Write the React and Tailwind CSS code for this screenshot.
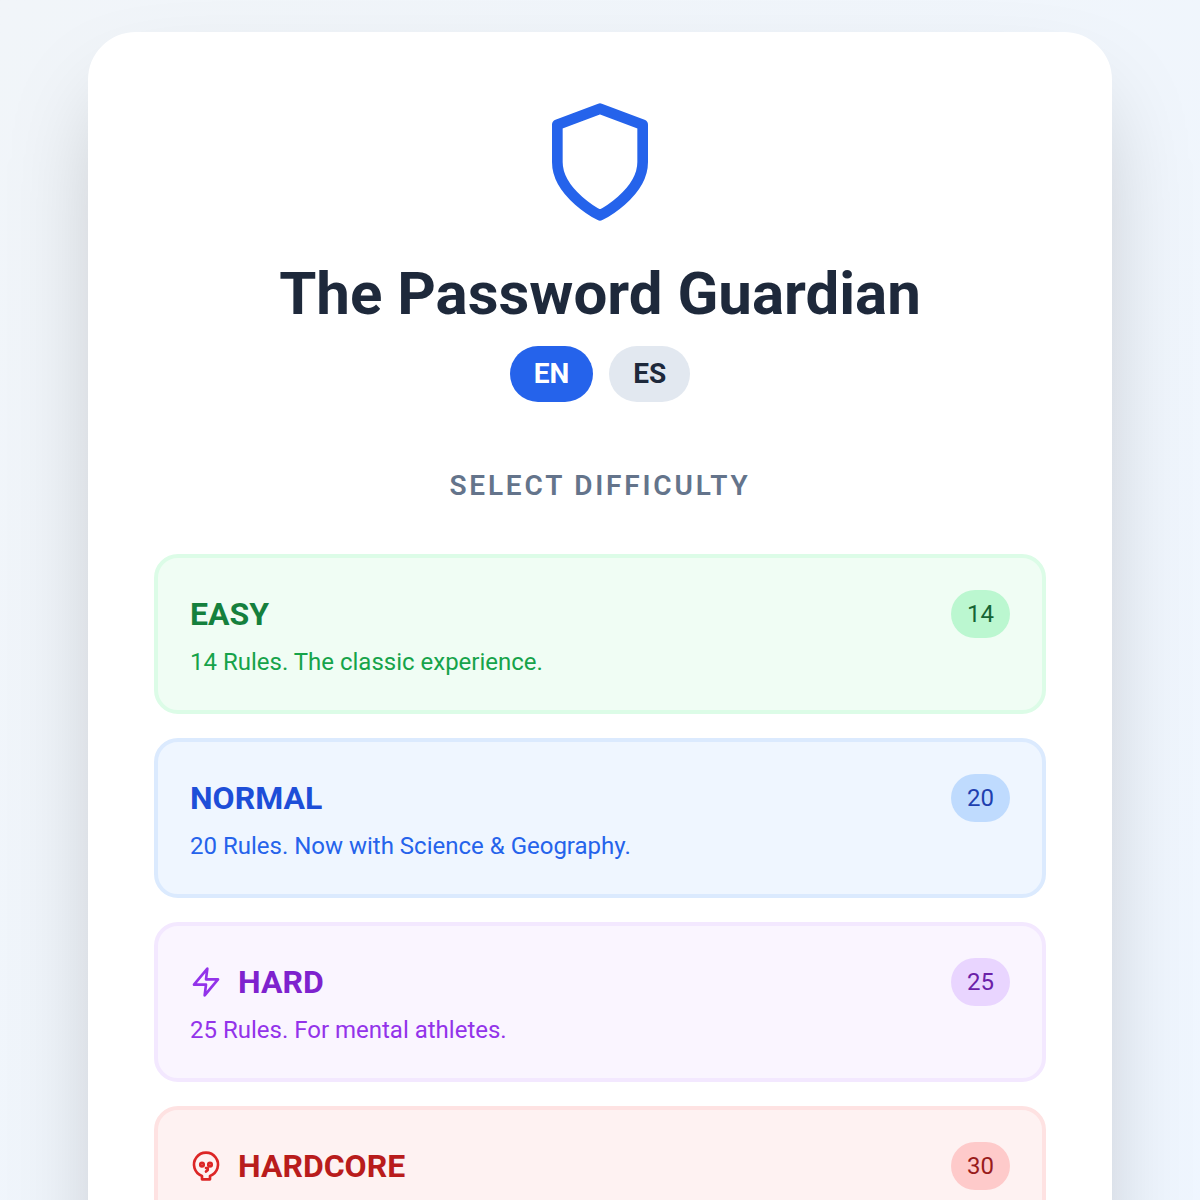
import React, { useState } from 'react';

const levels = [
  {
    id: 'easy',
    name: 'EASY',
    rules: 14,
    description: '14 Rules. The classic experience.',
    card: 'bg-[#f0fdf4] border-[#dcfce7]',
    title: 'text-[#15803d]',
    text: 'text-[#16a34a]',
    badge: 'bg-[#bbf7d0] text-[#166534]',
  },
  {
    id: 'normal',
    name: 'NORMAL',
    rules: 20,
    description: '20 Rules. Now with Science & Geography.',
    card: 'bg-[#eff6ff] border-[#dbeafe]',
    title: 'text-[#1d4ed8]',
    text: 'text-[#2563eb]',
    badge: 'bg-[#bfdbfe] text-[#1e40af]',
  },
  {
    id: 'hard',
    name: 'HARD',
    rules: 25,
    description: '25 Rules. For mental athletes.',
    icon: 'zap',
    card: 'bg-[#faf5ff] border-[#f3e8ff]',
    title: 'text-[#7e22ce]',
    text: 'text-[#9333ea]',
    badge: 'bg-[#e9d5ff] text-[#6b21a8]',
  },
  {
    id: 'hardcore',
    name: 'HARDCORE',
    rules: 30,
    description: '30 Rules.',
    icon: 'skull',
    card: 'bg-[#fef2f2] border-[#fee2e2]',
    title: 'text-[#b91c1c]',
    text: 'text-[#dc2626]',
    badge: 'bg-[#fecaca] text-[#991b1b]',
  },
];

const Icon = ({ name, className }) => (
  <svg
    viewBox="0 0 24 24"
    fill="none"
    stroke="currentColor"
    strokeWidth="2"
    strokeLinecap="round"
    strokeLinejoin="round"
    aria-hidden="true"
    className={className}
  >
    {name === 'shield' && <path d="M12 22s8-4 8-10V5l-8-3-8 3v7c0 6 8 10 8 10z" />}
    {name === 'zap' && <path d="M13 2 3 14h9l-1 8 10-12h-9l1-8z" />}
    {name === 'skull' && (
      <>
        <circle cx="9" cy="11" r="1.3" />
        <circle cx="15" cy="11" r="1.3" />
        <path d="M9 22v-2.5a9 9 0 1 1 6 0V22z" />
        <path d="M12 13.5h1.3v1.5l-1.3 1.2" />
      </>
    )}
  </svg>
);

const App = () => {
  const [lang, setLang] = useState('en');

  return (
    <div className="min-h-screen flex justify-center items-start p-8 bg-gradient-to-br from-[#f1f5f9] to-[#eff6ff] font-[Roboto,sans-serif] text-[#1e293b]">
      <main className="w-full max-w-5xl bg-white border-2 border-white rounded-[48px] p-16 shadow-[0_50px_100px_-24px_rgba(0,0,0,0.25)]">
        <header className="flex flex-col items-center mb-16">
          <Icon name="shield" className="w-32 h-32 mb-8 text-[#2563eb]" />
          <h1 className="text-6xl leading-[72px] font-bold text-center mb-4">The Password Guardian</h1>
          <div className="flex gap-4">
            {['en', 'es'].map(code => (
              <button
                key={code}
                onClick={() => setLang(code)}
                aria-pressed={lang === code}
                className={`px-6 py-2 rounded-full text-[28px] leading-10 font-bold uppercase ${
                  lang === code ? 'bg-[#2563eb] text-white' : 'bg-[#e2e8f0]'
                }`}
              >
                {code}
              </button>
            ))}
          </div>
        </header>

        <h2 className="text-[28px] leading-10 font-semibold text-center uppercase tracking-widest text-[#64748b] mb-12">
          Select difficulty
        </h2>

        <div className="flex flex-col gap-6">
          {levels.map(level => (
            <button
              key={level.id}
              className={`flex items-start justify-between p-8 border-4 rounded-3xl text-left ${level.card}`}
            >
              <span className="flex flex-col gap-2">
                <span className={`flex items-center gap-4 text-[32px] leading-[48px] font-bold ${level.title}`}>
                  {level.icon && <Icon name={level.icon} className={`w-8 h-8 ${level.text}`} />}
                  {level.name}
                </span>
                <span className={`text-2xl ${level.text}`}>{level.description}</span>
              </span>
              <span className={`px-4 py-2 rounded-full text-2xl ${level.badge}`}>{level.rules}</span>
            </button>
          ))}
        </div>
      </main>
    </div>
  );
};

export default App;
